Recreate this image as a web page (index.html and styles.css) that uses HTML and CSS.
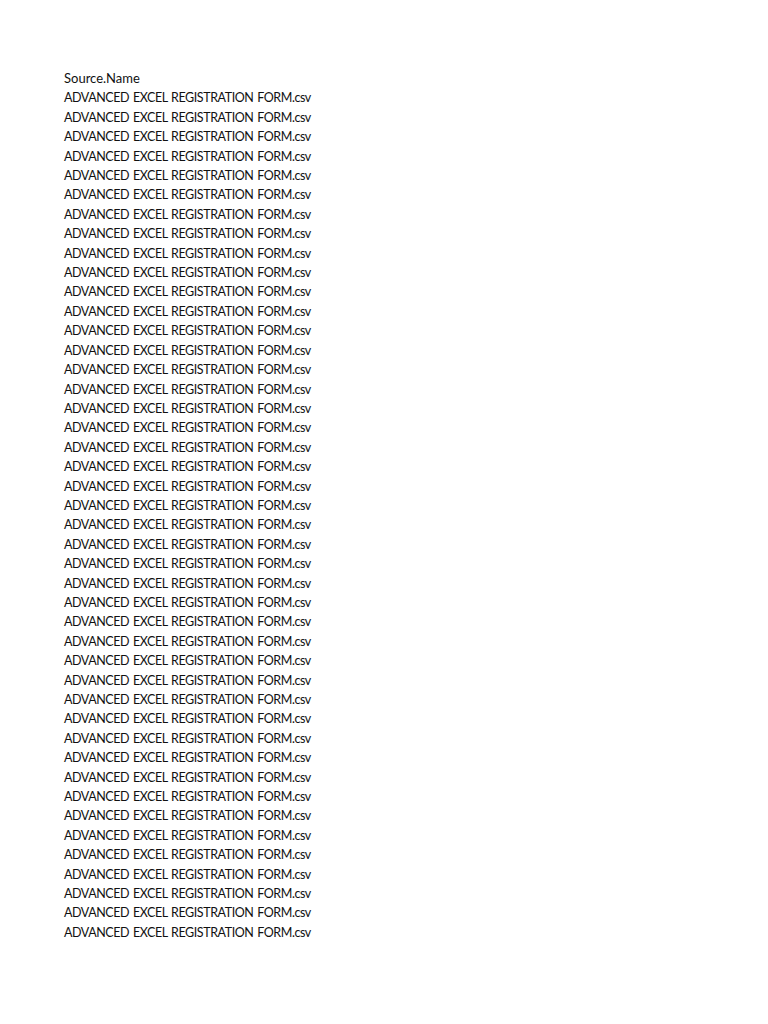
FILE: index.html
```html
<!DOCTYPE html>
<html>
<head>
<meta charset="utf-8">
<link rel="stylesheet" href="styles.css">
</head>
<body>
<div class="sheet">
<div class="row head">Source.Name</div>
<div class="row">ADVANCED EXCEL REGISTRATION FORM.csv</div>
<div class="row">ADVANCED EXCEL REGISTRATION FORM.csv</div>
<div class="row">ADVANCED EXCEL REGISTRATION FORM.csv</div>
<div class="row">ADVANCED EXCEL REGISTRATION FORM.csv</div>
<div class="row">ADVANCED EXCEL REGISTRATION FORM.csv</div>
<div class="row">ADVANCED EXCEL REGISTRATION FORM.csv</div>
<div class="row">ADVANCED EXCEL REGISTRATION FORM.csv</div>
<div class="row">ADVANCED EXCEL REGISTRATION FORM.csv</div>
<div class="row">ADVANCED EXCEL REGISTRATION FORM.csv</div>
<div class="row">ADVANCED EXCEL REGISTRATION FORM.csv</div>
<div class="row">ADVANCED EXCEL REGISTRATION FORM.csv</div>
<div class="row">ADVANCED EXCEL REGISTRATION FORM.csv</div>
<div class="row">ADVANCED EXCEL REGISTRATION FORM.csv</div>
<div class="row">ADVANCED EXCEL REGISTRATION FORM.csv</div>
<div class="row">ADVANCED EXCEL REGISTRATION FORM.csv</div>
<div class="row">ADVANCED EXCEL REGISTRATION FORM.csv</div>
<div class="row">ADVANCED EXCEL REGISTRATION FORM.csv</div>
<div class="row">ADVANCED EXCEL REGISTRATION FORM.csv</div>
<div class="row">ADVANCED EXCEL REGISTRATION FORM.csv</div>
<div class="row">ADVANCED EXCEL REGISTRATION FORM.csv</div>
<div class="row">ADVANCED EXCEL REGISTRATION FORM.csv</div>
<div class="row">ADVANCED EXCEL REGISTRATION FORM.csv</div>
<div class="row">ADVANCED EXCEL REGISTRATION FORM.csv</div>
<div class="row">ADVANCED EXCEL REGISTRATION FORM.csv</div>
<div class="row">ADVANCED EXCEL REGISTRATION FORM.csv</div>
<div class="row">ADVANCED EXCEL REGISTRATION FORM.csv</div>
<div class="row">ADVANCED EXCEL REGISTRATION FORM.csv</div>
<div class="row">ADVANCED EXCEL REGISTRATION FORM.csv</div>
<div class="row">ADVANCED EXCEL REGISTRATION FORM.csv</div>
<div class="row">ADVANCED EXCEL REGISTRATION FORM.csv</div>
<div class="row">ADVANCED EXCEL REGISTRATION FORM.csv</div>
<div class="row">ADVANCED EXCEL REGISTRATION FORM.csv</div>
<div class="row">ADVANCED EXCEL REGISTRATION FORM.csv</div>
<div class="row">ADVANCED EXCEL REGISTRATION FORM.csv</div>
<div class="row">ADVANCED EXCEL REGISTRATION FORM.csv</div>
<div class="row">ADVANCED EXCEL REGISTRATION FORM.csv</div>
<div class="row">ADVANCED EXCEL REGISTRATION FORM.csv</div>
<div class="row">ADVANCED EXCEL REGISTRATION FORM.csv</div>
<div class="row">ADVANCED EXCEL REGISTRATION FORM.csv</div>
<div class="row">ADVANCED EXCEL REGISTRATION FORM.csv</div>
<div class="row">ADVANCED EXCEL REGISTRATION FORM.csv</div>
<div class="row">ADVANCED EXCEL REGISTRATION FORM.csv</div>
<div class="row">ADVANCED EXCEL REGISTRATION FORM.csv</div>
<div class="row">ADVANCED EXCEL REGISTRATION FORM.csv</div>
</div>
</body>
</html>
```
FILE: styles.css
```css
html, body {
  margin: 0;
  padding: 0;
  background: #ffffff;
}
.sheet {
  padding: 69px 0 0 64px;
  font-family: Lato, "Open Sans", sans-serif;
  font-size: 12.5px;
  line-height: 19.41px;
  color: #111111;
}
.row {
  white-space: nowrap;
  letter-spacing: -0.43px;
  word-spacing: 1px;
}
.row.head {
  font-size: 13px;
  letter-spacing: 0;
  word-spacing: 0;
}
```
